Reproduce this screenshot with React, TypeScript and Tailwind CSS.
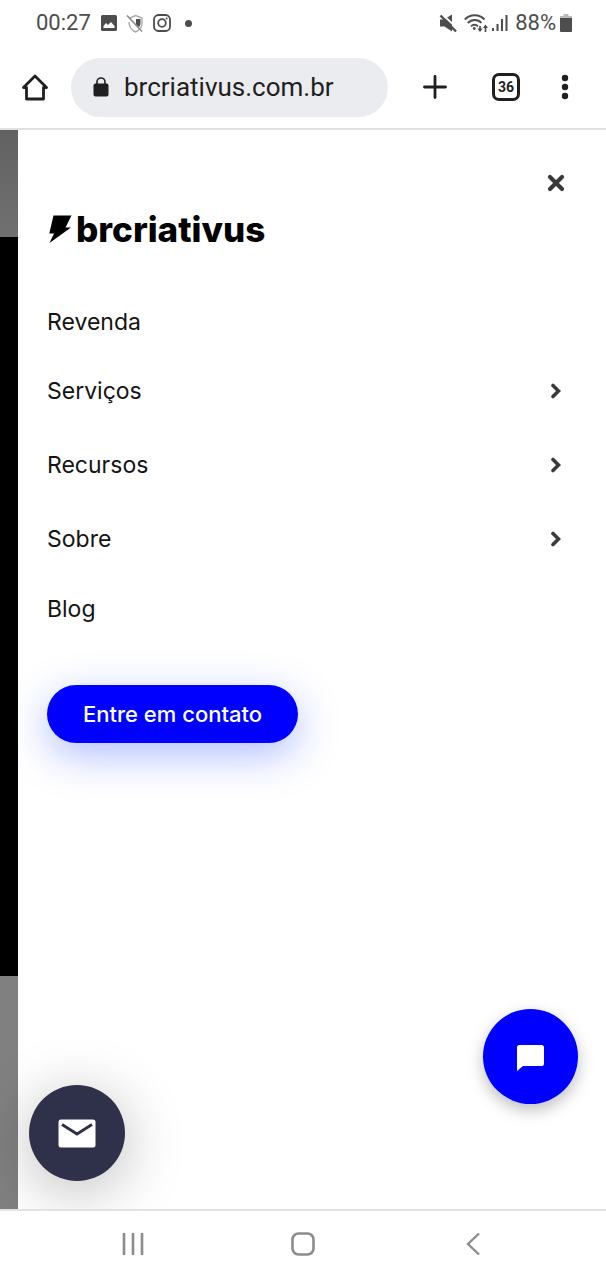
import type { ReactNode } from 'react';

interface MenuItem {
  label: string;
  hasSubmenu?: boolean;
}

const menuItems: MenuItem[] = [
  { label: 'Revenda' },
  { label: 'Serviços', hasSubmenu: true },
  { label: 'Recursos', hasSubmenu: true },
  { label: 'Sobre', hasSubmenu: true },
  { label: 'Blog' },
];

function StatusBar() {
  return (
    <div className="flex h-[46px] items-center justify-between pl-9 pr-[34px] text-[#4d4d4d]">
      <div className="flex items-center">
        <span className="w-[55px] text-[22px] leading-6">00:27</span>
        {/* Gallery */}
        <svg className="ml-[10px] size-4" viewBox="0 0 16 16">
          <rect width="16" height="16" rx="1.5" fill="currentColor" />
          <path d="M2.500 13v-2l2.500-3 2 2 3-3 3.500 4v2z" fill="#fff" />
        </svg>
        {/* Shield, crossed out */}
        <svg className="ml-[9px] h-[19px] w-[18px]" viewBox="0 0 18 19" fill="none">
          <path d="M3 4.500 9.500 1.500 16 4v5c0 4-2.500 7-6.500 9C5.500 16 3 12.500 3 8" stroke="#aaa" strokeWidth="1.400" />
          <path d="M10 5h4.500v4c0 2-1 3.500-1.500 4l-3-2.500z" fill="currentColor" />
          <path d="m1 1.500 15 16" stroke="#888" strokeWidth="1.600" />
        </svg>
        {/* Instagram */}
        <svg className="ml-[9px] size-[18px]" viewBox="0 0 18 18" fill="none" stroke="currentColor">
          <rect x="1" y="1" width="16" height="16" rx="4.500" strokeWidth="1.800" />
          <circle cx="9" cy="9" r="3.800" strokeWidth="1.800" />
          <circle cx="13.600" cy="4.400" r="1" fill="currentColor" stroke="none" />
        </svg>
        <span className="ml-[14px] size-[7px] rounded-full bg-[#4d4d4d]" />
      </div>

      <div className="flex items-center">
        {/* Muted speaker */}
        <svg className="h-[19px] w-[18px]" viewBox="0 0 18 19">
          <path d="M1 5.500h4L13 .500v17l-7.500-5H1z" fill="currentColor" />
          <path d="M3 0 18 14" stroke="#fff" strokeWidth="1.800" />
          <path d="m1.500 1.500 15.500 16" stroke="currentColor" strokeWidth="2.400" />
        </svg>
        {/* Wifi */}
        <svg className="ml-[7px] h-[19px] w-6" viewBox="0 0 24 19" fill="none" stroke="currentColor" strokeWidth="1.900">
          <path d="M.800 5.500C6-.200 15.500-.200 20.500 5.500M3.800 9c3.800-4 10-4 13.700-.200M7 12.300c2-2 5-2 7 0" />
          <circle cx="10.300" cy="14.500" r="1.400" fill="currentColor" stroke="none" />
          <path d="M16 12v4M21.500 13v5" strokeWidth="1.700" />
          <path d="m13.300 14.500 2.700 3.500 2.700-3.500zM18.800 14l2.700-3.500L24 14z" fill="currentColor" stroke="none" />
        </svg>
        {/* Signal */}
        <svg className="ml-1 h-[18px] w-4" viewBox="0 0 16 18" fill="currentColor">
          <rect x="0" y="14" width="2" height="3" />
          <rect x="4.500" y="10" width="2" height="7" />
          <rect x="9" y="5" width="2" height="12" />
          <rect x="13.500" y="1" width="2" height="16" />
        </svg>
        <span className="ml-[7px] text-[22px] leading-6">88%</span>
        {/* Battery */}
        <svg className="ml-1 h-[18px] w-3" viewBox="0 0 12 18">
          <path d="M3.500 0h5v2H12v3H0V2h3.500z" fill="#bbb" />
          <path d="M0 4h12v13a1 1 0 0 1-1 1H1a1 1 0 0 1-1-1z" fill="currentColor" />
        </svg>
      </div>
    </div>
  );
}

function ToolbarButton({ label, children }: { label: string; children: ReactNode }) {
  return (
    <button type="button" aria-label={label} className="flex size-7 shrink-0 items-center justify-center">
      {children}
    </button>
  );
}

function BrowserBar() {
  return (
    <div className="flex h-[84px] items-center border-b-2 border-[#e2e2e2] pl-[21px] pr-[27px] text-[#1f1f21]">
      <ToolbarButton label="Home">
        <svg className="size-7" viewBox="0 0 28 28" fill="none" stroke="currentColor" strokeWidth="2.800" strokeLinejoin="round">
          <path d="M2.500 14.500 14 3l11.500 11.500h-3V26h-17V14.500z" />
        </svg>
      </ToolbarButton>
      <label className="ml-[22px] flex h-[59px] flex-1 items-center rounded-full bg-[#ebecf0] pl-[22px]">
        <svg className="h-5 w-4 shrink-0" viewBox="0 0 16 20">
          <rect x=".500" y="6.500" width="15" height="13" rx="2" fill="currentColor" />
          <path d="M4 8V5a4 4 0 0 1 8 0v3" fill="none" stroke="currentColor" strokeWidth="1.600" />
        </svg>
        <input
          type="text"
          aria-label="Address"
          defaultValue="brcriativus.com.br"
          className="ml-[15px] w-full min-w-0 bg-transparent text-[26px] leading-8 outline-none"
        />
      </label>
      <div className="ml-[33px] flex items-center">
        <ToolbarButton label="New tab">
          <svg className="size-6" viewBox="0 0 24 24" stroke="currentColor" strokeWidth="2.800" strokeLinecap="round">
            <path d="M12 1.500v21M1.500 12h21" />
          </svg>
        </ToolbarButton>
        <button
          type="button"
          aria-label="Tabs"
          className="ml-[43px] flex size-7 items-center justify-center rounded-[7px] border-3 border-[#1f1f21] text-[14px] leading-4 font-bold"
        >
          36
        </button>
        <span className="ml-[31px] flex">
          <ToolbarButton label="More">
            <svg className="h-[26px] w-2" viewBox="0 0 8 26" fill="currentColor">
              <circle cx="4" cy="4" r="3.200" />
              <circle cx="4" cy="13" r="3.200" />
              <circle cx="4" cy="22" r="3.200" />
            </svg>
          </ToolbarButton>
        </span>
      </div>
    </div>
  );
}

function Logo() {
  return (
    <a href="#" className="flex items-center text-black">
      <svg className="h-7 w-6" viewBox="0 0 24 28" fill="currentColor">
        <path d="M4.500.500H22.500L16.500 12.500H22L.500 28l4.500-9.500H.300z" />
      </svg>
      <span className="ml-[3px] text-[35px] leading-10 font-extrabold">brcriativus</span>
    </a>
  );
}

function MenuRow({ item }: { item: MenuItem }) {
  if (!item.hasSubmenu) {
    return (
      <li>
        <a href="#" className="flex h-[65px] items-center">
          {item.label}
        </a>
      </li>
    );
  }
  return (
    <li>
      <button type="button" className="flex h-[74px] w-full items-center justify-between text-left">
        {item.label}
        <svg className="h-4 w-[10px]" viewBox="0 0 10 16" fill="none" stroke="#3a3a3a" strokeWidth="3.600" strokeLinecap="round">
          <path d="m2 2.500 5.500 5.500L2 13.500" />
        </svg>
      </button>
    </li>
  );
}

function SideMenu() {
  return (
    <div className="flex flex-1 flex-col items-start bg-white pl-[29px] pr-[45px] pt-[41px] font-[Inter,sans-serif]">
      <button type="button" aria-label="Fechar" className="-mr-1 flex h-6 items-center self-end">
        <svg className="size-[18px]" viewBox="0 0 18 18" stroke="#3a3a3a" strokeWidth="4.200" strokeLinecap="round">
          <path d="m3 3 12 12M15 3 3 15" />
        </svg>
      </button>
      <div className="mt-[14px] ml-[2px]">
        <Logo />
      </div>
      <nav className="mt-10 w-full">
        <ul className="text-[23px] leading-7 text-[#141414]">
          {menuItems.map((item) => (
            <MenuRow key={item.label} item={item} />
          ))}
        </ul>
      </nav>
      <a
        href="#"
        className="mt-11 flex h-[58px] items-center rounded-full bg-[#0000ff] px-9 text-[22px] leading-7 font-medium text-white shadow-[0_12px_42px_rgba(60,90,255,0.4)]"
      >
        Entre em contato
      </a>
    </div>
  );
}

function SystemNav() {
  return (
    <div className="grid h-[71px] grid-cols-3 items-center justify-items-center border-t-2 border-[#e2e2e2] bg-white px-12 pb-1 text-[#8c8c8c]">
      <button type="button" aria-label="Recents">
        <svg className="h-6 w-[22px]" viewBox="0 0 22 24" stroke="currentColor" strokeWidth="2.600">
          <path d="M2 1v22M11 1v22M20 1v22" />
        </svg>
      </button>
      <button type="button" aria-label="Home screen">
        <svg className="size-6" viewBox="0 0 24 24" fill="none" stroke="currentColor" strokeWidth="2.600">
          <rect x="1.500" y="1.500" width="21" height="21" rx="6" />
        </svg>
      </button>
      <button type="button" aria-label="Back">
        <svg className="h-6 w-[14px]" viewBox="0 0 14 24" fill="none" stroke="currentColor" strokeWidth="2.400">
          <path d="M13 1.500 2 12l11 10.500" />
        </svg>
      </button>
    </div>
  );
}

export default function App() {
  return (
    <div className="flex min-h-screen flex-col bg-white font-[Roboto,sans-serif]">
      <header>
        <StatusBar />
        <BrowserBar />
      </header>

      <main className="relative flex flex-1 overflow-hidden">
        {/* Dimmed page behind the menu */}
        <div className="flex w-[18px] shrink-0 flex-col bg-black">
          <div className="h-[107px] bg-linear-to-b from-[#626262] to-[#707070]" />
          <div className="flex-1" />
          <div className="h-[233px] bg-[#808080]" />
        </div>
        <SideMenu />

        <button
          type="button"
          aria-label="Chat"
          className="absolute right-7 bottom-[105px] flex size-[95px] items-center justify-center rounded-full bg-[#0000ff] shadow-[0_6px_16px_rgba(0,0,0,0.26)]"
        >
          <svg className="h-7 w-[27px]" viewBox="0 0 27 28" fill="#fff">
            <path d="M2.500 2h22A2.500 2.500 0 0 1 27 4.500v16a2.500 2.500 0 0 1-2.500 2.500H6L0 28V4.500A2.500 2.500 0 0 1 2.500 2z" />
          </svg>
        </button>
        <button
          type="button"
          aria-label="E-mail"
          className="absolute bottom-7 left-[29px] flex size-24 items-center justify-center rounded-full bg-[#2f3049] shadow-[0_10px_60px_rgba(0,0,0,0.27)]"
        >
          <svg className="h-[29px] w-[38px]" viewBox="0 0 38 29">
            <rect x=".500" y=".500" width="37" height="28" rx="2.500" fill="#fff" />
            <path d="M4 5.500 19 15 34 5.500" fill="none" stroke="#2f3049" strokeWidth="2.800" />
          </svg>
        </button>
      </main>

      <SystemNav />
    </div>
  );
}
